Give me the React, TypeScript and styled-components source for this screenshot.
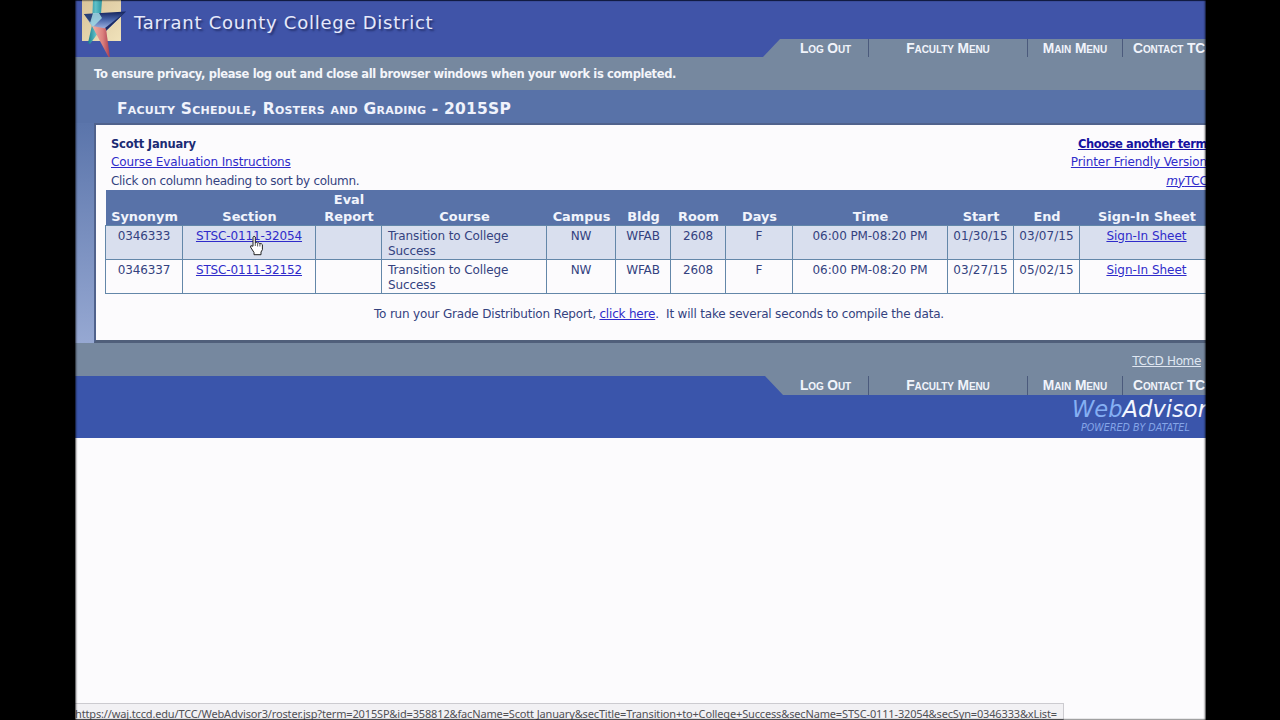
import React from 'react';
import styled, { createGlobalStyle } from 'styled-components';

const GlobalStyle = createGlobalStyle`
  * { box-sizing: border-box; }
  html, body { margin: 0; background: #000; overflow: hidden; }
  body { font-family: "DejaVu Sans", Verdana, sans-serif; font-size: 12px; color: #34427f; }
`;

const Screen = styled.main`
  display: flex;
  flex-direction: column;
  position: relative;
  width: 1131px;
  height: 720px;
  margin-left: 75px;
  overflow: hidden;
  background: #fcfbfd;
`;

const EdgeShade = styled.div`
  position: absolute;
  inset: 0;
  pointer-events: none;
  box-shadow: inset 1px 0 2px #000000c0, inset -1px 0 2px #000000c0;
`;

const Header = styled.header`
  display: flex;
  justify-content: space-between;
  height: 57px;
  flex: none;
  background: #4054a8;
  border-top: 1px solid #1c2b68;
`;

const Brand = styled.div`
  display: flex;
  align-items: flex-start;
`;

const Logo = styled.svg`
  display: block;
  margin: -1px 0 0 5px;
`;

const BrandName = styled.div`
  margin: 10px 0 0 7px;
  font-size: 18px;
  line-height: 24px;
  letter-spacing: 0.75px;
  white-space: nowrap;
  color: #e6e9fa;
  text-shadow: 2px 2px 2px #24316f;
`;

const Nav = styled.nav<{ $flip?: boolean }>`
  display: flex;
  flex: none;
  align-self: ${p => (p.$flip ? 'flex-start' : 'flex-end')};
  width: 443px;
  height: ${p => (p.$flip ? 19 : 18)}px;
  padding-left: 20px;
  background: #76889f;
  clip-path: ${p => (p.$flip
    ? 'polygon(0 0, 100% 0, 100% 100%, 20px 100%, 2px 0)'
    : 'polygon(17px 0, 100% 0, 100% 100%, 0 100%)')};
`;

const NavItem = styled.a<{ $w: number }>`
  width: ${p => p.$w}px;
  flex: none;
  border-right: 1px solid #4b5a7c;
  text-align: center;
  font: bold 13.8px/19px "Liberation Sans", Arial, sans-serif;
  font-variant: small-caps;
  letter-spacing: -0.1px;
  white-space: nowrap;
  color: #f1f4fb;
`;

const Privacy = styled.div`
  flex: none;
  height: 33px;
  padding-left: 19px;
  background: #76889f;
  color: #f3f5fa;
  font-weight: bold;
  font-size: 11.5px;
  line-height: 35px;
  letter-spacing: -0.36px;
`;

const Content = styled.section`
  flex: none;
  height: 253px;
  background: linear-gradient(#5872a8, #5b75ab 14%, #96a8d2);
`;

const Title = styled.h1`
  margin: 0;
  height: 33px;
  padding-left: 42px;
  background: #5872a8;
  color: #f0f3fc;
  font-size: 15.5px;
  line-height: 38px;
  font-variant: small-caps;
  letter-spacing: 0.21px;
  white-space: nowrap;
`;

const Panel = styled.div`
  height: 220px;
  width: 1200px;
  margin-left: 19px;
  border: 2px solid #50628c;
  border-bottom: 3px solid #505f7a;
  background: #fcfbfd;
`;

const Intro = styled.div`
  display: flex;
  justify-content: space-between;
  width: 1111px;
  padding: 10px 0 0 15px;
  height: 65px;
`;

const Lines = styled.div<{ $end?: boolean }>`
  display: flex;
  flex-direction: column;
  align-items: ${p => (p.$end ? 'flex-end' : 'flex-start')};
  line-height: 18.4px;
  white-space: nowrap;
`;

const Line = styled.div<{ $ls?: number; $shift?: number }>`
  letter-spacing: ${p => p.$ls ?? 0}px;
  margin-right: ${p => p.$shift ?? 0}px;
`;

const Name = styled(Line)`
  font-weight: bold;
  font-size: 11.5px;
  color: #1b2b74;
`;

const Link = styled.a<{ $bold?: boolean }>`
  color: ${p => (p.$bold ? '#1512a0' : '#2f2bca')};
  font-weight: ${p => (p.$bold ? 'bold' : 'normal')};
  text-decoration: underline;
`;

const Table = styled.table`
  width: 1108px;
  margin-left: 9px;
  border-collapse: collapse;
  table-layout: fixed;
`;

const HeadCell = styled.th`
  height: 35px;
  padding: 0 0 0 1px;
  background: #5872a8;
  color: #f1f4fc;
  font-size: 12.9px;
  line-height: 17px;
  vertical-align: bottom;
`;

const Row = styled.tr<{ $shaded?: boolean }>`
  background: ${p => (p.$shaded ? '#d9dfee' : 'transparent')};
`;

const Cell = styled.td<{ $left?: boolean; $ls?: number }>`
  height: 34px;
  padding: 3px 5px 0 ${p => (p.$left ? 6 : 5)}px;
  border: 1px solid #6387a9;
  text-align: ${p => (p.$left ? 'left' : 'center')};
  vertical-align: top;
  line-height: 15px;
  letter-spacing: ${p => p.$ls ?? -0.15}px;
  white-space: ${p => (p.$left ? 'normal' : 'nowrap')};
`;

const Report = styled.p`
  margin: 11px 0 0 278px;
  line-height: 18px;
  letter-spacing: -0.19px;
  white-space: pre;
`;

const HomeBar = styled.div`
  flex: none;
  display: flex;
  justify-content: flex-end;
  height: 33px;
  padding-right: 5px;
  background: #76889f;
  line-height: 36px;
  letter-spacing: -0.35px;
`;

const HomeLink = styled.a`
  color: #dfe6f1;
  text-decoration: underline;
`;

const Footer = styled.footer`
  flex: none;
  display: flex;
  flex-direction: column;
  align-items: flex-end;
  height: 62px;
  background: #3a55ab;
`;

const FooterNavRow = styled.div`
  display: flex;
  width: 100%;
  justify-content: flex-end;
`;

const Advisor = styled.div`
  width: 134px;
  color: #f3f6ff;
  font-size: 22.6px;
  font-style: italic;
  line-height: 29px;
  height: 28px;
  white-space: nowrap;
`;

const Web = styled.span`
  color: #85aff3;
`;

const Powered = styled.div`
  width: 125px;
  color: #85a5e8;
  font-size: 9.6px;
  font-style: italic;
  line-height: 10px;
  white-space: nowrap;
`;

const StatusBar = styled.div`
  position: absolute;
  left: 0;
  bottom: 0;
  width: 989px;
  height: 17px;
  background: #f2f1f4;
  border: 1px solid #cccbd0;
  border-width: 1px 1px 0 0;
  border-bottom: 1px solid #77777c;
  color: #505055;
  font: 11px/20px "Noto Sans", "Open Sans", sans-serif;
  letter-spacing: -0.15px;
  white-space: nowrap;
`;

const Cursor = styled.svg`
  position: absolute;
  left: 174px;
  top: 235px;
`;

const NAV: [string, number][] = [
  ['Log Out', 86],
  ['Faculty Menu', 159],
  ['Main Menu', 95],
  ['Contact TCCD', 113],
];

const COLUMNS: [React.ReactNode, number][] = [
  ['Synonym', 77],
  ['Section', 133],
  [<>Eval<br />Report</>, 66],
  ['Course', 165],
  ['Campus', 69],
  ['Bldg', 55],
  ['Room', 55],
  ['Days', 67],
  ['Time', 155],
  ['Start', 66],
  ['End', 66],
  ['Sign-In Sheet', 134],
];

const SECTIONS = [
  { synonym: '0346333', section: 'STSC-0111-32054', start: '01/30/15', end: '03/07/15' },
  { synonym: '0346337', section: 'STSC-0111-32152', start: '03/27/15', end: '05/02/15' },
];

const NavBar = ({ flip }: { flip?: boolean }) => (
  <Nav $flip={flip}>
    {NAV.map(([label, w]) => <NavItem key={label} $w={w}>{label}</NavItem>)}
  </Nav>
);

const StarLogo = () => (
  <Logo width="47" height="58" viewBox="0 0 47 58">
    <defs>
      <linearGradient id="tan" x1="0" y1="0" x2="1" y2="1">
        <stop offset="0" stopColor="#d8c39a" />
        <stop offset="1" stopColor="#f0e2ba" />
      </linearGradient>
      <linearGradient id="teal" x1="0" y1="0" x2="1" y2="0">
        <stop offset="0" stopColor="#187c8c" />
        <stop offset=".55" stopColor="#5fc0c8" />
        <stop offset="1" stopColor="#2b95a2" />
      </linearGradient>
      <linearGradient id="navy" x1="0" y1="0" x2="0" y2="1">
        <stop offset="0" stopColor="#14225a" />
        <stop offset=".4" stopColor="#4561a6" />
        <stop offset="1" stopColor="#b4c8f0" />
      </linearGradient>
      <linearGradient id="red" x1="0" y1="0" x2="1" y2="0">
        <stop offset="0" stopColor="#f3b3a6" />
        <stop offset=".6" stopColor="#db7f7c" />
        <stop offset="1" stopColor="#a83c50" />
      </linearGradient>
    </defs>
    <path d="M2 0h39v41H2z" fill="url(#tan)" />
    <path d="M13 0h9l-1 14-3 19-8 11-2-1 4-18z" fill="url(#teal)" />
    <path d="M4 14l42-2.5-20 19.5-14-5z" fill="url(#navy)" />
    <path d="M4 14l11 1-4 8z" fill="#2a4378" />
    <path d="M13 13h6l3 5-9 9-3-4z" fill="#a3dbe4" opacity=".85" />
    <path d="M46 11.5L26 31l-1-3z" fill="#1d2c66" />
    <path d="M12 26l14 2.5 4 29.5-1 0z" fill="url(#red)" />
  </Logo>
);

export default function App() {
  return (
    <>
      <GlobalStyle />
      <Screen>
        <Header>
          <Brand>
            <StarLogo />
            <BrandName>Tarrant County College District</BrandName>
          </Brand>
          <NavBar />
        </Header>
        <Privacy>To ensure privacy, please log out and close all browser windows when your work is completed.</Privacy>
        <Content>
          <Title>Faculty Schedule, Rosters and Grading - 2015SP</Title>
          <Panel>
            <Intro>
              <Lines>
                <Name $ls={-0.2}>Scott January</Name>
                <Line $ls={-0.12}><Link>Course Evaluation Instructions</Link></Line>
                <Line $ls={-0.3}>Click on column heading to sort by column.</Line>
              </Lines>
              <Lines $end>
                <Name $ls={-0.42}><Link $bold>Choose another term</Link></Name>
                <Line $ls={-0.12}><Link>Printer Friendly Version</Link></Line>
                <Line $ls={-0.12} $shift={-10}><Link><i>my</i>TCCD</Link></Line>
              </Lines>
            </Intro>
            <Table>
              <colgroup>
                {COLUMNS.map(([, w], i) => <col key={i} width={w} />)}
              </colgroup>
              <thead>
                <tr>{COLUMNS.map(([label], i) => <HeadCell key={i}>{label}</HeadCell>)}</tr>
              </thead>
              <tbody>
                {SECTIONS.map((s, i) => (
                  <Row key={s.synonym} $shaded={i === 0}>
                    <Cell>{s.synonym}</Cell>
                    <Cell><Link>{s.section}</Link></Cell>
                    <Cell />
                    <Cell $left $ls={-0.1}>Transition to College Success</Cell>
                    <Cell>NW</Cell>
                    <Cell>WFAB</Cell>
                    <Cell>2608</Cell>
                    <Cell>F</Cell>
                    <Cell $ls={-0.08}>06:00 PM-08:20 PM</Cell>
                    <Cell $ls={0.05}>{s.start}</Cell>
                    <Cell $ls={0.05}>{s.end}</Cell>
                    <Cell $ls={0}><Link>Sign-In Sheet</Link></Cell>
                  </Row>
                ))}
              </tbody>
            </Table>
            <Report>To run your Grade Distribution Report, <Link>click here</Link>.  It will take several seconds to compile the data.</Report>
          </Panel>
        </Content>
        <HomeBar><HomeLink>TCCD Home</HomeLink></HomeBar>
        <Footer>
          <FooterNavRow><NavBar flip /></FooterNavRow>
          <Advisor><Web>Web</Web>Advisor</Advisor>
          <Powered>POWERED BY DATATEL</Powered>
        </Footer>
        <StatusBar>https://waj.tccd.edu/TCC/WebAdvisor3/roster.jsp?term=2015SP&amp;id=358812&amp;facName=Scott January&amp;secTitle=Transition+to+College+Success&amp;secName=STSC-0111-32054&amp;secSyn=0346333&amp;xList=</StatusBar>
        <Cursor width="15" height="21" viewBox="0 0 15 21">
          <path
            d="M4 2.2Q5 .4 6.3 2V8q1-1.3 2.2 0 1.4-.8 2.3.7 1.6-.6 2.6 1v5L12 17v2.7H5V17.5L1.5 12Q1 9.8 4 11.2z"
            fill="#fff" stroke="#222" strokeWidth="1"
          />
          <path d="M6.3 8v3M8.6 8.5v3M10.9 9v2.5" stroke="#333" strokeWidth=".8" />
        </Cursor>
        <EdgeShade />
      </Screen>
    </>
  );
}
